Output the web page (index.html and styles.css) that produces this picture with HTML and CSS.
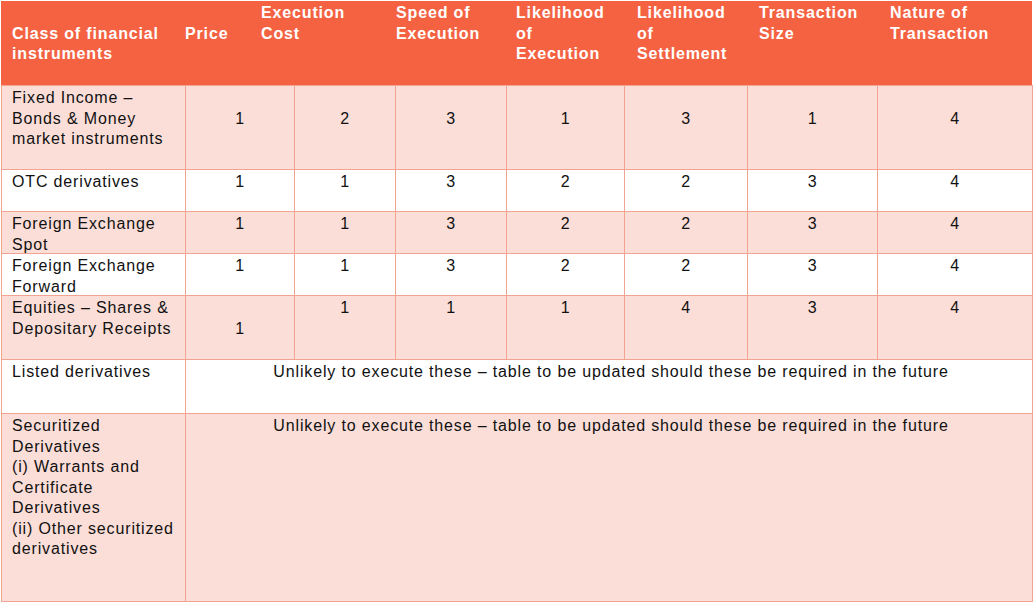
FILE: index.html
```html
<!DOCTYPE html>
<html>
<head>
<meta charset="utf-8">
<link rel="stylesheet" href="styles.css">
</head>
<body>
<div class="sheet">
  <div class="head">
    <div class="hc l2">Class of financial instruments</div>
    <div class="hc l2">Price</div>
    <div class="hc">Execution Cost</div>
    <div class="hc">Speed of Execution</div>
    <div class="hc">Likelihood of Execution</div>
    <div class="hc">Likelihood of Settlement</div>
    <div class="hc">Transaction Size</div>
    <div class="hc">Nature of Transaction</div>
  </div>
  <table class="grid">
    <colgroup>
      <col class="c1"><col class="c2"><col class="c3"><col class="c4"><col class="c5"><col class="c6"><col class="c7"><col class="c8">
    </colgroup>
    <tbody>
      <tr class="r1 tint">
        <td class="name"><span class="t">Fixed Income –<br>Bonds &amp; Money market instruments</span></td>
        <td class="num l2"><span class="t">1</span></td><td class="num l2"><span class="t">2</span></td><td class="num l2"><span class="t">3</span></td><td class="num l2"><span class="t">1</span></td><td class="num l2"><span class="t">3</span></td><td class="num l2"><span class="t">1</span></td><td class="num l2"><span class="t">4</span></td>
      </tr>
      <tr class="r2">
        <td class="name"><span class="t">OTC derivatives</span></td>
        <td class="num"><span class="t">1</span></td><td class="num"><span class="t">1</span></td><td class="num"><span class="t">3</span></td><td class="num"><span class="t">2</span></td><td class="num"><span class="t">2</span></td><td class="num"><span class="t">3</span></td><td class="num"><span class="t">4</span></td>
      </tr>
      <tr class="r3 tint">
        <td class="name"><span class="t">Foreign Exchange Spot</span></td>
        <td class="num"><span class="t">1</span></td><td class="num"><span class="t">1</span></td><td class="num"><span class="t">3</span></td><td class="num"><span class="t">2</span></td><td class="num"><span class="t">2</span></td><td class="num"><span class="t">3</span></td><td class="num"><span class="t">4</span></td>
      </tr>
      <tr class="r4">
        <td class="name"><span class="t">Foreign Exchange Forward</span></td>
        <td class="num"><span class="t">1</span></td><td class="num"><span class="t">1</span></td><td class="num"><span class="t">3</span></td><td class="num"><span class="t">2</span></td><td class="num"><span class="t">2</span></td><td class="num"><span class="t">3</span></td><td class="num"><span class="t">4</span></td>
      </tr>
      <tr class="r5 tint">
        <td class="name"><span class="t">Equities – Shares &amp; Depositary Receipts</span></td>
        <td class="num l2"><span class="t">1</span></td><td class="num"><span class="t">1</span></td><td class="num"><span class="t">1</span></td><td class="num"><span class="t">1</span></td><td class="num"><span class="t">4</span></td><td class="num"><span class="t">3</span></td><td class="num"><span class="t">4</span></td>
      </tr>
      <tr class="r6">
        <td class="name"><span class="t">Listed derivatives</span></td>
        <td class="note" colspan="7"><span class="t">Unlikely to execute these – table to be updated should these be required in the future</span></td>
      </tr>
      <tr class="r7 tint">
        <td class="name"><span class="t">Securitized<br>Derivatives<br>(i) Warrants and Certificate Derivatives<br>(ii) Other securitized derivatives</span></td>
        <td class="note" colspan="7"><span class="t">Unlikely to execute these – table to be updated should these be required in the future</span></td>
      </tr>
    </tbody>
  </table>
</div>
</body>
</html>
```

FILE: styles.css
```css
html, body {
  margin: 0;
  padding: 0;
  background: #ffffff;
}

.sheet {
  margin: 1px 0 0 1px;
  width: 1031px;
  font-family: "Liberation Sans", Arial, sans-serif;
  font-size: 16px;
  line-height: 20.5px;
  color: #111111;
}

.head {
  display: grid;
  grid-template-columns: 173px 76px 135px 120px 121px 122px 131px 153px;
  height: 84px;
  background: #f46242;
  color: #ffffff;
  font-weight: bold;
  letter-spacing: 0.85px;
}

.hc {
  padding: 2px 12px 0 11px;
}

.hc:first-child {
  padding-right: 4px;
}

.hc.l2 {
  padding-top: 22.5px;
}

.grid {
  width: 1031px;
  border-collapse: collapse;
  table-layout: fixed;
  letter-spacing: 0.85px;
}

.c1 { width: 184px; }
.c2 { width: 109px; }
.c3 { width: 101px; }
.c4 { width: 111px; }
.c5 { width: 118px; }
.c6 { width: 123px; }
.c7 { width: 130px; }
.c8 { width: 155px; }

.grid td {
  border: 1px solid #f3a391;
  vertical-align: top;
  padding: 0 6px 0 10px;
}

/* lower the glyphs inside each 20.5px line without growing the line box */
.t {
  line-height: 17px;
  vertical-align: -1.5px;
}

.tint td {
  background: #fbded8;
}

.grid td.num {
  text-align: center;
  padding-left: 8px;
  padding-right: 8px;
}

.grid td.num.l2 {
  padding-top: 20.5px;
}

.grid td.note {
  text-align: center;
}

.r1 { height: 84px; }
.r2 { height: 42px; }
.r3 { height: 42px; }
.r4 { height: 42px; }
.r5 { height: 64px; }
.r6 { height: 54px; }
.r7 { height: 188px; }
```
